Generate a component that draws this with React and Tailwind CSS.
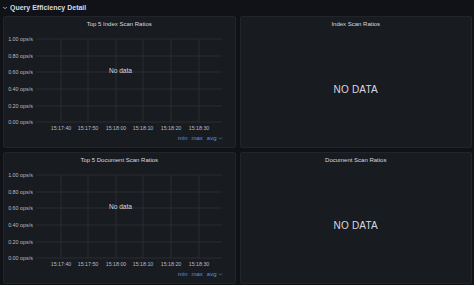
import { ChevronDown } from "lucide-react";

const yTicks = [
  { label: "1.00 ops/s", y: 7 },
  { label: "0.80 ops/s", y: 24 },
  { label: "0.60 ops/s", y: 40 },
  { label: "0.40 ops/s", y: 57 },
  { label: "0.20 ops/s", y: 74 },
  { label: "0.00 ops/s", y: 90 },
];

const xTicks = [
  { label: "15:17:40", x: 57 },
  { label: "15:17:50", x: 84 },
  { label: "15:18:00", x: 112 },
  { label: "15:18:10", x: 139 },
  { label: "15:18:20", x: 167 },
  { label: "15:18:30", x: 195 },
];

function Panel({ title, children }) {
  return (
    <div className="flex flex-col bg-[#181b1f] border border-[#212428] rounded-[2px] overflow-hidden">
      <div className="h-[15px] flex items-center justify-center text-[6px] text-[#d8d9e0] shrink-0">
        {title}
      </div>
      {children}
    </div>
  );
}

function TimeSeries({ title }) {
  return (
    <Panel title={title}>
      <svg width="232" height="101" className="shrink-0" style={{ fontFamily: "'Liberation Sans', Arial, sans-serif" }}>
        {yTicks.map((t) => (
          <g key={t.label}>
            <line x1="32" x2="218" y1={t.y} y2={t.y} stroke="#2a2d32" strokeWidth="1" />
            <text x="29" y={t.y + 2} textAnchor="end" fontSize="5.4" fill="#b9bac4">
              {t.label}
            </text>
          </g>
        ))}
        {xTicks.map((t) => (
          <g key={t.label}>
            <line x1={t.x} x2={t.x} y1="7" y2="90" stroke="#2a2d32" strokeWidth="1" />
            <text x={t.x} y="98" textAnchor="middle" fontSize="5.3" fill="#b9bac4">
              {t.label}
            </text>
          </g>
        ))}
        <text x="116.5" y="40.5" textAnchor="middle" fontSize="6.6" fill="#d8d9e0">
          No data
        </text>
      </svg>
      <div className="flex justify-end items-center gap-[4px] pr-[12px] pt-[1px] text-[6px] text-[#4a98e8]">
        <span>min</span>
        <span>max</span>
        <span className="flex items-center gap-[1px]">
          avg
          <ChevronDown size={5} strokeWidth={3} />
        </span>
      </div>
    </Panel>
  );
}

function Stat({ title }) {
  return (
    <Panel title={title}>
      <div className="flex-1 flex items-center justify-center pb-[1px] text-[10px] text-[#d8d9e0] tracking-[0.2px]">
        NO DATA
      </div>
    </Panel>
  );
}

export default function App() {
  return (
    <div
      className="w-[474px] h-[285px] bg-[#111217] text-[#ccccdc] flex flex-col overflow-hidden"
      style={{ fontFamily: "'Liberation Sans', Arial, sans-serif" }}
    >
      {/* Row header */}
      <div className="h-[16px] flex items-center pl-[2px] gap-[2px] shrink-0">
        <ChevronDown size={6} strokeWidth={3} className="text-[#d8d9e0]" />
        <span className="text-[7px] font-bold text-[#d8d9e0]">Query Efficiency Detail</span>
      </div>

      <div className="grid grid-cols-2 grid-rows-[132px_132px] gap-[4px] pl-[3px] pr-[2px]">
        <TimeSeries title="Top 5 Index Scan Ratios" />
        <Stat title="Index Scan Ratios" />
        <TimeSeries title="Top 5 Document Scan Ratios" />
        <Stat title="Document Scan Ratios" />
      </div>
    </div>
  );
}
